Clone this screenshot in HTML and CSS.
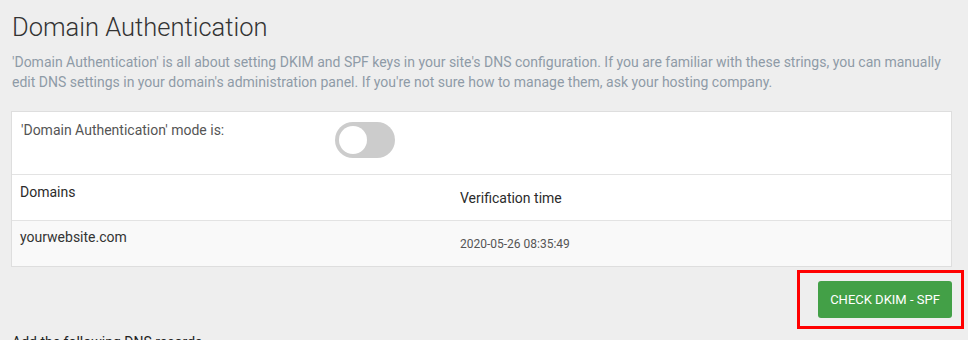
FILE: index.html
```html
<!DOCTYPE html>
<html>
<head>
<meta charset="utf-8">
<link rel="stylesheet" href="styles.css">
</head>
<body>
<div class="page">
  <h1 class="title">Domain Authentication</h1>
  <p class="desc">'Domain Authentication' is all about setting DKIM and SPF keys in your site's DNS configuration. If you are familiar with these strings, you can manually edit DNS settings in your domain's administration panel. If you're not sure how to manage them, ask your hosting company.</p>
  <div class="panel">
    <div class="mode-row">
      <span class="mode-label">'Domain Authentication' mode is:</span>
      <span class="toggle"><span class="knob"></span></span>
    </div>
    <div class="grid head">
      <div class="cell c1">Domains</div>
      <div class="cell c2">Verification time</div>
    </div>
    <div class="grid data">
      <div class="cell c1">yourwebsite.com</div>
      <div class="cell c2 date">2020-05-26 08:35:49</div>
    </div>
  </div>
  <div class="actions">
    <div class="highlight">
      <button class="btn">CHECK DKIM - SPF</button>
    </div>
  </div>
  <p class="add">Add the following DNS records</p>
</div>
</body>
</html>
```
FILE: styles.css
```css
html, body {
  margin: 0;
  padding: 0;
  background: #eeeeee;
}
body {
  font-family: Roboto, "Liberation Sans", sans-serif;
  font-size: 14px;
  line-height: 20px;
  color: #333;
}
.page {
  padding: 11px 16px 0 11px;
}
.title {
  margin: 0 0 0 1px;
  font-size: 25.5px;
  line-height: 32px;
  font-weight: 300;
  color: #333;
}
.desc {
  margin: 9px 0 0 1px;
  color: #8e9ba7;
  font-size: 14px;
  line-height: 20px;
}
.panel {
  margin-top: 19px;
  background: #fff;
  border: 1px solid #dedede;
}
.mode-row {
  display: flex;
  align-items: flex-start;
  height: 62px;
  box-sizing: border-box;
  padding: 8px 9px 0 9px;
}
.mode-label {
  width: 314px;
  color: #555;
}
.toggle {
  position: relative;
  display: block;
  width: 60px;
  height: 36px;
  margin-top: 2px;
  border-radius: 18px;
  background: #cccccc;
}
.knob {
  position: absolute;
  left: 4px;
  top: 4px;
  width: 28px;
  height: 28px;
  border-radius: 50%;
  background: #fff;
}
.grid {
  display: grid;
  grid-template-columns: 440px 1fr;
  border-top: 1px solid #e3e3e3;
  height: 46px;
  box-sizing: border-box;
}
.cell {
  padding: 0 8px;
}
.head .c1 {
  padding-top: 7px;
  color: #2b2b2b;
}
.head .c2 {
  padding-top: 13px;
  color: #2b2b2b;
}
.data {
  background: #f9f9f9;
}
.data .c1 {
  padding-top: 6px;
  color: #333;
}
.date {
  padding-top: 13px;
  font-size: 12px;
  color: #555;
}
.actions {
  display: flex;
  justify-content: flex-end;
  margin-top: 3px;
  margin-right: -12px;
}
.highlight {
  border: 3px solid #ff0000;
  padding: 8px 9px 8px 18px;
}
.btn {
  display: block;
  width: 134px;
  height: 37px;
  border: 0;
  border-radius: 3px;
  background: #43a047;
  color: #fff;
  font-family: Roboto, "Liberation Sans", sans-serif;
  font-size: 13px;
  font-weight: 400;
  padding: 0;
}
.add {
  margin: 3px 0 0 1px;
  color: #222;
}
```
